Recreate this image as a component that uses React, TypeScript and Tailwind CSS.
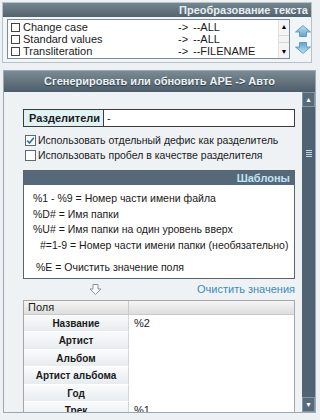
import React from 'react';

const font = { fontFamily: '"Liberation Sans", Arial, sans-serif' };

function BlueArrow({ down }: { down?: boolean }) {
  return (
    <svg width="16" height="12" viewBox="0 0 16 12" className={down ? 'rotate-180' : ''}>
      <defs>
        <linearGradient id={down ? 'bad' : 'bau'} x1="0" y1="0" x2="0" y2="1">
          <stop offset="0" stopColor="#bfe2f3" />
          <stop offset="1" stopColor="#5fa3cc" />
        </linearGradient>
      </defs>
      <path
        d="M8 0.5 L15.5 7 L11.5 7 L11.5 11.5 L4.5 11.5 L4.5 7 L0.5 7 Z"
        fill={`url(#${down ? 'bad' : 'bau'})`}
        stroke="#4f8fb8"
        strokeWidth="0.8"
        strokeLinejoin="round"
      />
    </svg>
  );
}

function Check({ checked }: { checked?: boolean }) {
  return (
    <span className="w-[11px] h-[11px] border border-[#5d6a73] bg-white flex items-center justify-center shrink-0">
      {checked && (
        <svg width="9" height="9" viewBox="0 0 9 9">
          <path d="M1.2 4.6 L3.5 7 L7.8 1.8" fill="none" stroke="#2b6fb5" strokeWidth="1.6" />
        </svg>
      )}
    </span>
  );
}

const transforms = [
  { name: 'Change case', field: '--ALL' },
  { name: 'Standard values', field: '--ALL' },
  { name: 'Transliteration', field: '--FILENAME' },
];

const fields = [
  { label: 'Название', value: '%2' },
  { label: 'Артист', value: '' },
  { label: 'Альбом', value: '' },
  { label: 'Артист альбома', value: '' },
  { label: 'Год', value: '' },
  { label: 'Трек', value: '%1' },
];

export default function App() {
  return (
    <div className="w-[320px] h-[420px] overflow-hidden bg-[#eef1f3] pt-[2px] pl-[2px] text-[#1a1a1a]" style={font}>
      {/* Преобразование текста */}
      <div className="w-[310px] h-[61px] border border-[#b7c1c8] bg-[#f2f5f7] flex flex-col">
        <div className="h-[14px] bg-gradient-to-b from-[#74868f] to-[#53636e] text-[#e8eef2] text-[11px] font-bold leading-[14px] text-right pr-[3px]">
          Преобразование текста
        </div>
        <div className="flex items-start pt-[2px] pl-[4px]">
          <div className="w-[284px] h-[40px] border border-[#7d8b95] bg-white flex">
            <div className="flex-1 flex flex-col pt-[1px]">
              {transforms.map((t) => (
                <div key={t.name} className="h-[12.5px] flex items-center text-[11px] leading-none pl-[3px]">
                  <span className="w-[9px] h-[9px] border border-[#444] bg-white mr-[3px]" />
                  <span className="w-[155px]">{t.name}</span>
                  <span className="w-[15px]">-&gt;</span>
                  <span>{t.field}</span>
                </div>
              ))}
            </div>
            <div className="w-[11px] flex flex-col justify-between bg-[#f4f4f4] border-l border-[#e3e3e3] py-[3px]">
              <span className="text-[7px] leading-none text-center text-black">▲</span>
              <span className="h-[8px] border-y border-[#d8d8d8]" />
              <span className="text-[7px] leading-none text-center text-black">▼</span>
            </div>
          </div>
          <div className="flex flex-col gap-[5px] ml-[5px] pt-[6px]">
            <BlueArrow />
            <BlueArrow down />
          </div>
        </div>
      </div>

      {/* Сгенерировать */}
      <div className="mt-[7px] ml-[1px] w-[313px] h-[343px] border border-[#9ba8b1] flex flex-col">
        <div className="h-[21px] shrink-0 bg-gradient-to-b from-[#7a8b95] to-[#4d5e6a] text-[#eef2f4] text-[11px] font-bold leading-[21px] text-center [text-shadow:0_1px_1px_#2a3640]">
          Сгенерировать или обновить APE -&gt; Авто
        </div>
        <div className="flex flex-1 min-h-0">
          <div className="flex-1 bg-[#eef2f5] pl-[19px] pr-[7px] pt-[17px] overflow-hidden">
            {/* Разделители */}
            <div className="flex h-[18px] border border-[#3c3c3c] bg-white">
              <div className="w-[80px] bg-[#e1f2f5] border-r border-[#3c3c3c] text-[11px] font-bold leading-[16px] pl-[5px]">
                Разделители
              </div>
              <div className="flex-1 text-[11px] leading-[16px] pl-[3px]">-</div>
            </div>
            <div className="mt-[6px] flex flex-col text-[10.5px] leading-none whitespace-nowrap">
              <div className="h-[15px] flex items-center gap-[2px] pl-[2px]">
                <Check checked />
                <span>Использовать отдельный дефис как разделитель</span>
              </div>
              <div className="h-[15px] flex items-center gap-[2px] pl-[2px]">
                <Check />
                <span>Использовать пробел в качестве разделителя</span>
              </div>
            </div>

            {/* Шаблоны */}
            <div className="mt-[7px] border border-[#56656f] bg-white">
              <div className="h-[14px] bg-[#56697a] text-[#bfe3f3] text-[11px] font-bold leading-[14px] text-right pr-[4px]">
                Шаблоны
              </div>
              <div className="pt-[6px] pb-[2px] pl-[9px] text-[10.5px] leading-[15.5px]">
                <div>%1 - %9 = Номер части имени файла</div>
                <div>%D# = Имя папки</div>
                <div>%U# = Имя папки на один уровень вверх</div>
                <div className="pl-[7px]">#=1-9 = Номер части имени папки (необязательно)</div>
                <div className="pl-[3px] mt-[7px]">%E = Очистить значение поля</div>
              </div>
            </div>

            {/* Очистить */}
            <div className="h-[21px] flex items-center">
              <div className="flex-1 flex justify-center pl-[8px]">
                <svg width="13" height="11" viewBox="0 0 13 11">
                  <path d="M4 0.5 H9 V5 H12 L6.5 10.5 L1 5 H4 Z" fill="#fafafa" stroke="#8c969c" strokeWidth="1" strokeLinejoin="round" />
                </svg>
              </div>
              <span className="text-[11px] text-[#3a8cc0] ml-[38px]">Очистить значения</span>
            </div>

            {/* Поля */}
            <div className="border border-[#a7a7a7] bg-white">
              <div className="flex h-[14px] bg-gradient-to-b from-[#f5f5f5] to-[#dedede] border-b border-[#c9c9c9] text-[11px] leading-[13px]">
                <div className="w-[105px] pl-[4px] border-r border-[#c9c9c9]">Поля</div>
                <div className="flex-1" />
              </div>
              {fields.map((f) => (
                <div key={f.label} className="flex h-[17.6px]">
                  <div className="w-[105px] bg-gradient-to-b from-[#fafbfc] to-[#e7ecef] border-b border-white border-r border-r-[#d0d6da] text-[10px] font-bold leading-[17px] text-center">
                    {f.label}
                  </div>
                  <div className="flex-1 text-[11px] leading-[17px] pl-[5px]">{f.value}</div>
                </div>
              ))}
            </div>
          </div>

          {/* scrollbar */}
          <div className="w-[13px] bg-[#4f6373] flex flex-col justify-between">
            <div className="h-[15px] border border-[#8195a2] bg-[#566a79] flex items-center justify-center">
              <span className="text-[7px] leading-none text-white">▲</span>
            </div>
            <div className="flex-1 flex flex-col items-center pt-[43px] gap-[1px]">
              <span className="w-[6px] h-[1px] bg-[#c7d2d9]" />
              <span className="w-[6px] h-[1px] bg-[#c7d2d9]" />
              <span className="w-[6px] h-[1px] bg-[#c7d2d9]" />
              <span className="w-[6px] h-[1px] bg-[#c7d2d9]" />
            </div>
            <div className="h-[15px] border border-[#8195a2] bg-[#566a79] flex items-center justify-center">
              <span className="text-[7px] leading-none text-white">▼</span>
            </div>
          </div>
        </div>
      </div>
    </div>
  );
}
